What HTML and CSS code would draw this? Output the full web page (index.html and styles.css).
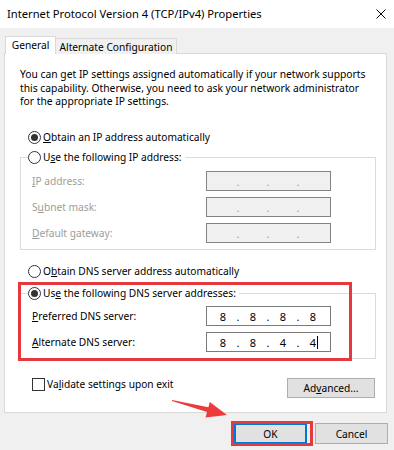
FILE: index.html
```html
<!DOCTYPE html>
<html>
<head>
<meta charset="utf-8">
<link rel="stylesheet" href="styles.css">
</head>
<body>
<div class="titlebar">
  <span class="title">Internet Protocol Version 4 (TCP/IPv4) Properties</span>
  <svg class="close" width="10" height="10" viewBox="0 0 10 10"><path d="M0.5 0.5L9.5 9.5M9.5 0.5L0.5 9.5" stroke="#000" stroke-width="1" fill="none"/></svg>
</div>
<div class="tabs">
  <div class="tab active">General</div>
  <div class="tab other">Alternate Configuration</div>
</div>
<div class="panel">
  <p class="desc">You can get IP settings assigned automatically if your network supports<br>this capability. Otherwise, you need to ask your network administrator<br>for the appropriate IP settings.</p>
  <div class="radio-row r1"><span class="radio checked"></span><span><u>O</u>btain an IP address automatically</span></div>
  <fieldset class="group g1 disabled">
    <legend><span class="lg"><span class="radio"></span><span>U<u>s</u>e the following IP address:</span></span></legend>
    <div class="field-row"><span class="label"><u>I</u>P address:</span><span class="ipbox"><span></span><span>.</span><span></span><span>.</span><span></span><span>.</span><span></span></span></div>
    <div class="field-row"><span class="label">S<u>u</u>bnet mask:</span><span class="ipbox"><span></span><span>.</span><span></span><span>.</span><span></span><span>.</span><span></span></span></div>
    <div class="field-row"><span class="label"><u>D</u>efault gateway:</span><span class="ipbox"><span></span><span>.</span><span></span><span>.</span><span></span><span>.</span><span></span></span></div>
  </fieldset>
  <div class="radio-row r2"><span class="radio"></span><span>O<u>b</u>tain DNS server address automatically</span></div>
  <fieldset class="group g2">
    <legend><span class="lg"><span class="radio checked"></span><span>Us<u>e</u> the following DNS server addresses:</span></span></legend>
    <div class="field-row"><span class="label"><u>P</u>referred DNS server:</span><span class="ipbox"><span>8</span><span>.</span><span>8</span><span>.</span><span>8</span><span>.</span><span>8</span></span></div>
    <div class="field-row"><span class="label"><u>A</u>lternate DNS server:</span><span class="ipbox"><span>8</span><span>.</span><span>8</span><span>.</span><span>4</span><span>.</span><span class="caret">4</span></span></div>
  </fieldset>
  <div class="bottom-row">
    <div class="check"><span class="box"></span><span>Va<u>l</u>idate settings upon exit</span></div>
    <button class="btn adv">Ad<u>v</u>anced...</button>
  </div>
</div>
<div class="footer">
  <button class="btn ok">OK</button>
  <button class="btn">Cancel</button>
</div>
<div class="hl hl-dns"></div>
<div class="hl hl-ok"></div>
<svg class="arrow" width="394" height="450" viewBox="0 0 394 450"><polygon points="172,400 208.4,407.3 209.8,402 227,415 205.6,417.4 207,412.1 172,401" fill="#ec3b3b"/></svg>
</body>
</html>
```
FILE: styles.css
```css
body {
  margin: 0;
  width: 394px;
  height: 450px;
  overflow: hidden;
  position: relative;
  background: #f0f0f0;
  font-family: "Noto Sans", sans-serif;
  font-size: 10.2px;
  color: #000;
}
u { text-decoration: underline; text-underline-offset: 1px; }
.titlebar {
  height: 28px;
  box-sizing: border-box;
  background: #fff;
  display: flex;
  align-items: center;
  justify-content: space-between;
  padding: 0 8px 2px 7px;
}
.title { font-size: 11.2px; }
.close { display: block; margin-top: 1px; }
.tabs {
  display: flex;
  align-items: flex-end;
  height: 18px;
  margin: 8px 0 -1px 5px;
}
.tab {
  box-sizing: border-box;
  border: 1px solid #d9d9d9;
  border-bottom: none;
  display: flex;
  align-items: center;
  justify-content: center;
}
.tab.active {
  width: 51px;
  height: 18px;
  background: #fff;
  position: relative;
  z-index: 1;
  padding-bottom: 1px;
}
.tab.other {
  width: 121px;
  height: 16px;
  border-left: none;
  background: #f0f0f0;
}
.panel {
  margin-left: 4px;
  width: 383px;
  height: 360px;
  box-sizing: border-box;
  border: 1px solid #d9d9d9;
  background: #fff;
  padding: 14px 10px 0 15px;
}
.desc { margin: 0; line-height: 13.5px; font-size: 10.3px; white-space: nowrap; }
.radio-row {
  display: flex;
  align-items: center;
  height: 16px;
  margin-left: 8px;
  gap: 2px;
}
.r1 { margin-top: 20.5px; }
.r2 { margin-top: 13px; }
.radio {
  width: 13px;
  height: 13px;
  box-sizing: border-box;
  border: 1px solid #333;
  border-radius: 50%;
  background: #fff;
  flex: none;
  display: flex;
  align-items: center;
  justify-content: center;
}
.radio.checked::after {
  content: "";
  width: 7px;
  height: 7px;
  border-radius: 50%;
  background: #333;
}
.group {
  margin: 0;
  padding: 6px 0 6px 11px;
  border: 1px solid #dcdcdc;
  min-inline-size: 0;
}
.g1 { margin-top: 4px; }
.g2 { margin-top: 6px; padding-top: 5px; }
legend {
  padding: 0 3px 0 0;
  margin-left: -4px;
}
.lg {
  display: flex;
  align-items: center;
  gap: 2px;
  height: 16px;
}
.field-row {
  display: flex;
  align-items: center;
  height: 20px;
}
.field-row + .field-row { margin-top: 6px; }
.label { width: 174px; flex: none; }
.ipbox {
  width: 125px;
  height: 20px;
  box-sizing: border-box;
  border: 1px solid #7a7a7a;
  background: #fff;
  display: grid;
  grid-template-columns: 24px 6px 24px 6px 24px 6px 24px;
  padding-left: 4px;
  align-items: center;
  justify-items: center;
  font-size: 11px;
}
.disabled .label { color: #9d9d9d; }
.disabled .ipbox { background: #f0f0f0; border-color: #838383; color: #a0a0a0; }
.caret { position: relative; }
.caret::after {
  content: "";
  position: absolute;
  left: 100%;
  margin-left: 1px;
  top: 1px;
  height: 13px;
  border-left: 1px solid #000;
}
.bottom-row {
  display: flex;
  justify-content: space-between;
  align-items: flex-start;
  margin-top: 17px;
}
.check {
  display: flex;
  align-items: center;
  height: 16px;
  margin-left: 12px;
  gap: 2px;
}
.box {
  width: 13px;
  height: 13px;
  box-sizing: border-box;
  border: 1px solid #333;
  background: #fff;
}
.btn {
  box-sizing: border-box;
  border: 1px solid #adadad;
  background: #e1e1e1;
  font: inherit;
  color: #000;
  padding: 0;
  margin: 0;
  display: flex;
  align-items: center;
  justify-content: center;
  width: 73px;
  height: 21px;
}
.adv { width: 88px; height: 20px; margin: 2px 1px 0 0; }
.footer {
  display: flex;
  justify-content: flex-end;
  gap: 8px;
  margin-top: 10px;
  padding-right: 6px;
}
.ok { border-color: #0078d7; box-shadow: inset 0 0 0 1px #0078d7; }
.hl {
  position: absolute;
  box-sizing: border-box;
  border: 3px solid #e5393d;
}
.hl-dns { left: 18px; top: 282px; width: 334px; height: 79px; }
.hl-ok { left: 231px; top: 421px; width: 82px; height: 25px; }
.arrow { position: absolute; left: 0; top: 0; pointer-events: none; }
```
